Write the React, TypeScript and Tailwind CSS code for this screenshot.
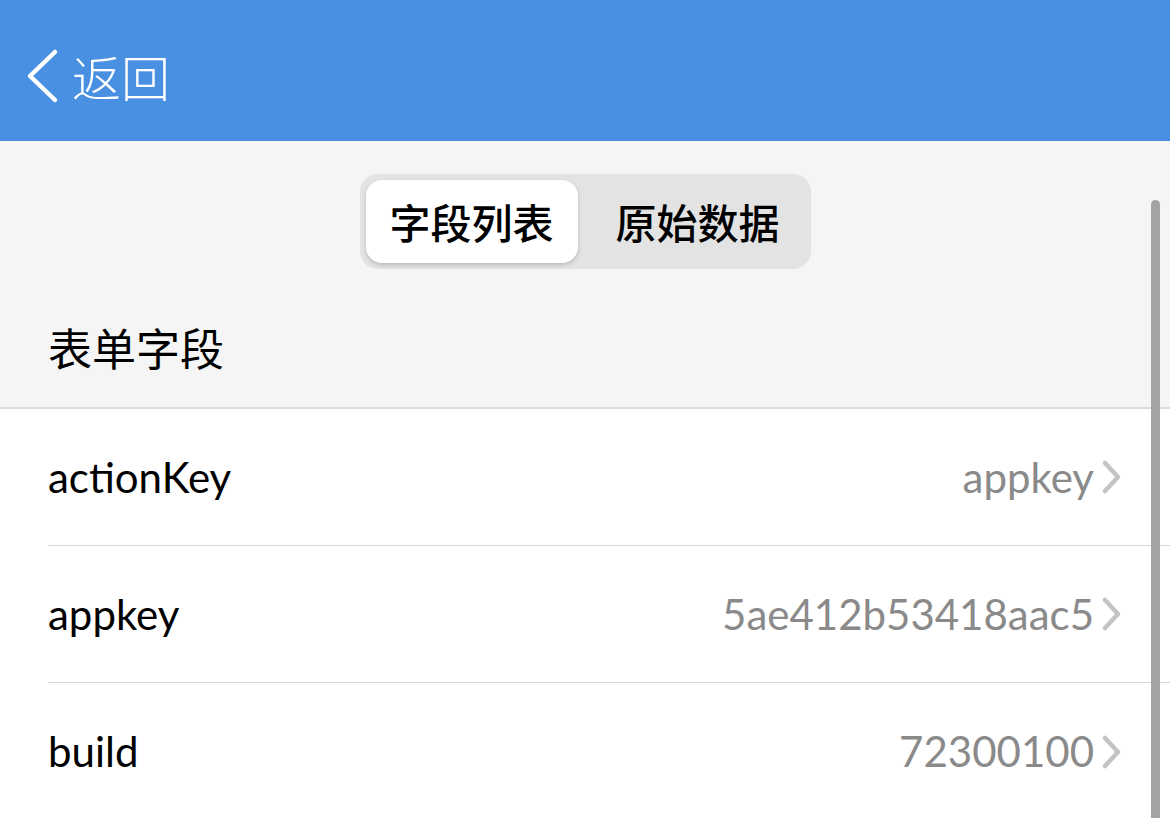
import React, { useState } from 'react';

const rows = [
  { key: 'actionKey', value: 'appkey' },
  { key: 'appkey', value: '5ae412b53418aac5' },
  { key: 'build', value: '72300100' },
];

const fontStack = { fontFamily: 'Lato, "Noto Sans CJK SC", sans-serif' };
const cjk = { fontFamily: '"Noto Sans CJK SC", sans-serif' };

const Chevron = () => (
  <svg width="22" height="34" viewBox="0 0 22 34" className="ml-[6px] shrink-0">
    <path d="M5 3 L18 17 L5 31" fill="none" stroke="#c4c4c4" strokeWidth="4.5" strokeLinecap="round" strokeLinejoin="round" />
  </svg>
);

export default function App() {
  const [tab, setTab] = useState(0);

  return (
    <div className="relative h-[818px] w-[1170px] overflow-hidden bg-[#f5f5f5]" style={fontStack}>
      {/* nav bar */}
      <div className="flex h-[141px] items-center bg-[#4a90e2] pl-[24px] pt-[10px]">
        <svg width="36" height="56" viewBox="0 0 36 56">
          <path d="M31 4 L6 28 L31 52" fill="none" stroke="#fff" strokeWidth="4.5" strokeLinecap="round" strokeLinejoin="round" />
        </svg>
        <span className="ml-[12px] text-[49px] leading-none text-white" style={{ ...cjk, fontWeight: 300 }}>
          返回
        </span>
      </div>

      {/* segmented control */}
      <div className="flex justify-center pt-[33px]">
        <div className="flex h-[95px] w-[451px] rounded-[18px] bg-[#e3e3e3] p-[6px]">
          {['字段列表', '原始数据'].map((t, i) => (
            <button
              key={t}
              onClick={() => setTab(i)}
              className={`flex h-full w-[212px] items-center justify-center rounded-[16px] text-[41px] text-black ${
                tab === i ? 'bg-white shadow-[0_2px_4px_rgba(0,0,0,0.18)]' : ''
              } ${i === 1 ? 'ml-[14px]' : ''}`}
              style={{ ...cjk, fontWeight: 500 }}
            >
              {t}
            </button>
          ))}
        </div>
      </div>

      {/* section header */}
      <div className="flex h-[138px] items-center pl-[48px] pt-[18px] text-[44px] text-black" style={cjk}>
        表单字段
      </div>

      {/* list */}
      <div className="border-t-2 border-[#dcdcdc] bg-white">
        {rows.map((r, i) => (
          <div key={r.key} className="pl-[48px]">
            <div className={`flex h-[137px] items-center pr-[48px] ${i < rows.length - 1 ? 'border-b border-[#d6d6d6]' : ''}`}>
              <span className="flex-1 text-[42px] text-black">{r.key}</span>
              <span className="text-[42px] text-[#8a8a8a]">{r.value}</span>
              <Chevron />
            </div>
          </div>
        ))}
      </div>

      {/* scroll indicator */}
      <div className="absolute left-[1151px] top-[200px] h-[640px] w-[9px] rounded-full bg-[#a3a3a3]" />
    </div>
  );
}
